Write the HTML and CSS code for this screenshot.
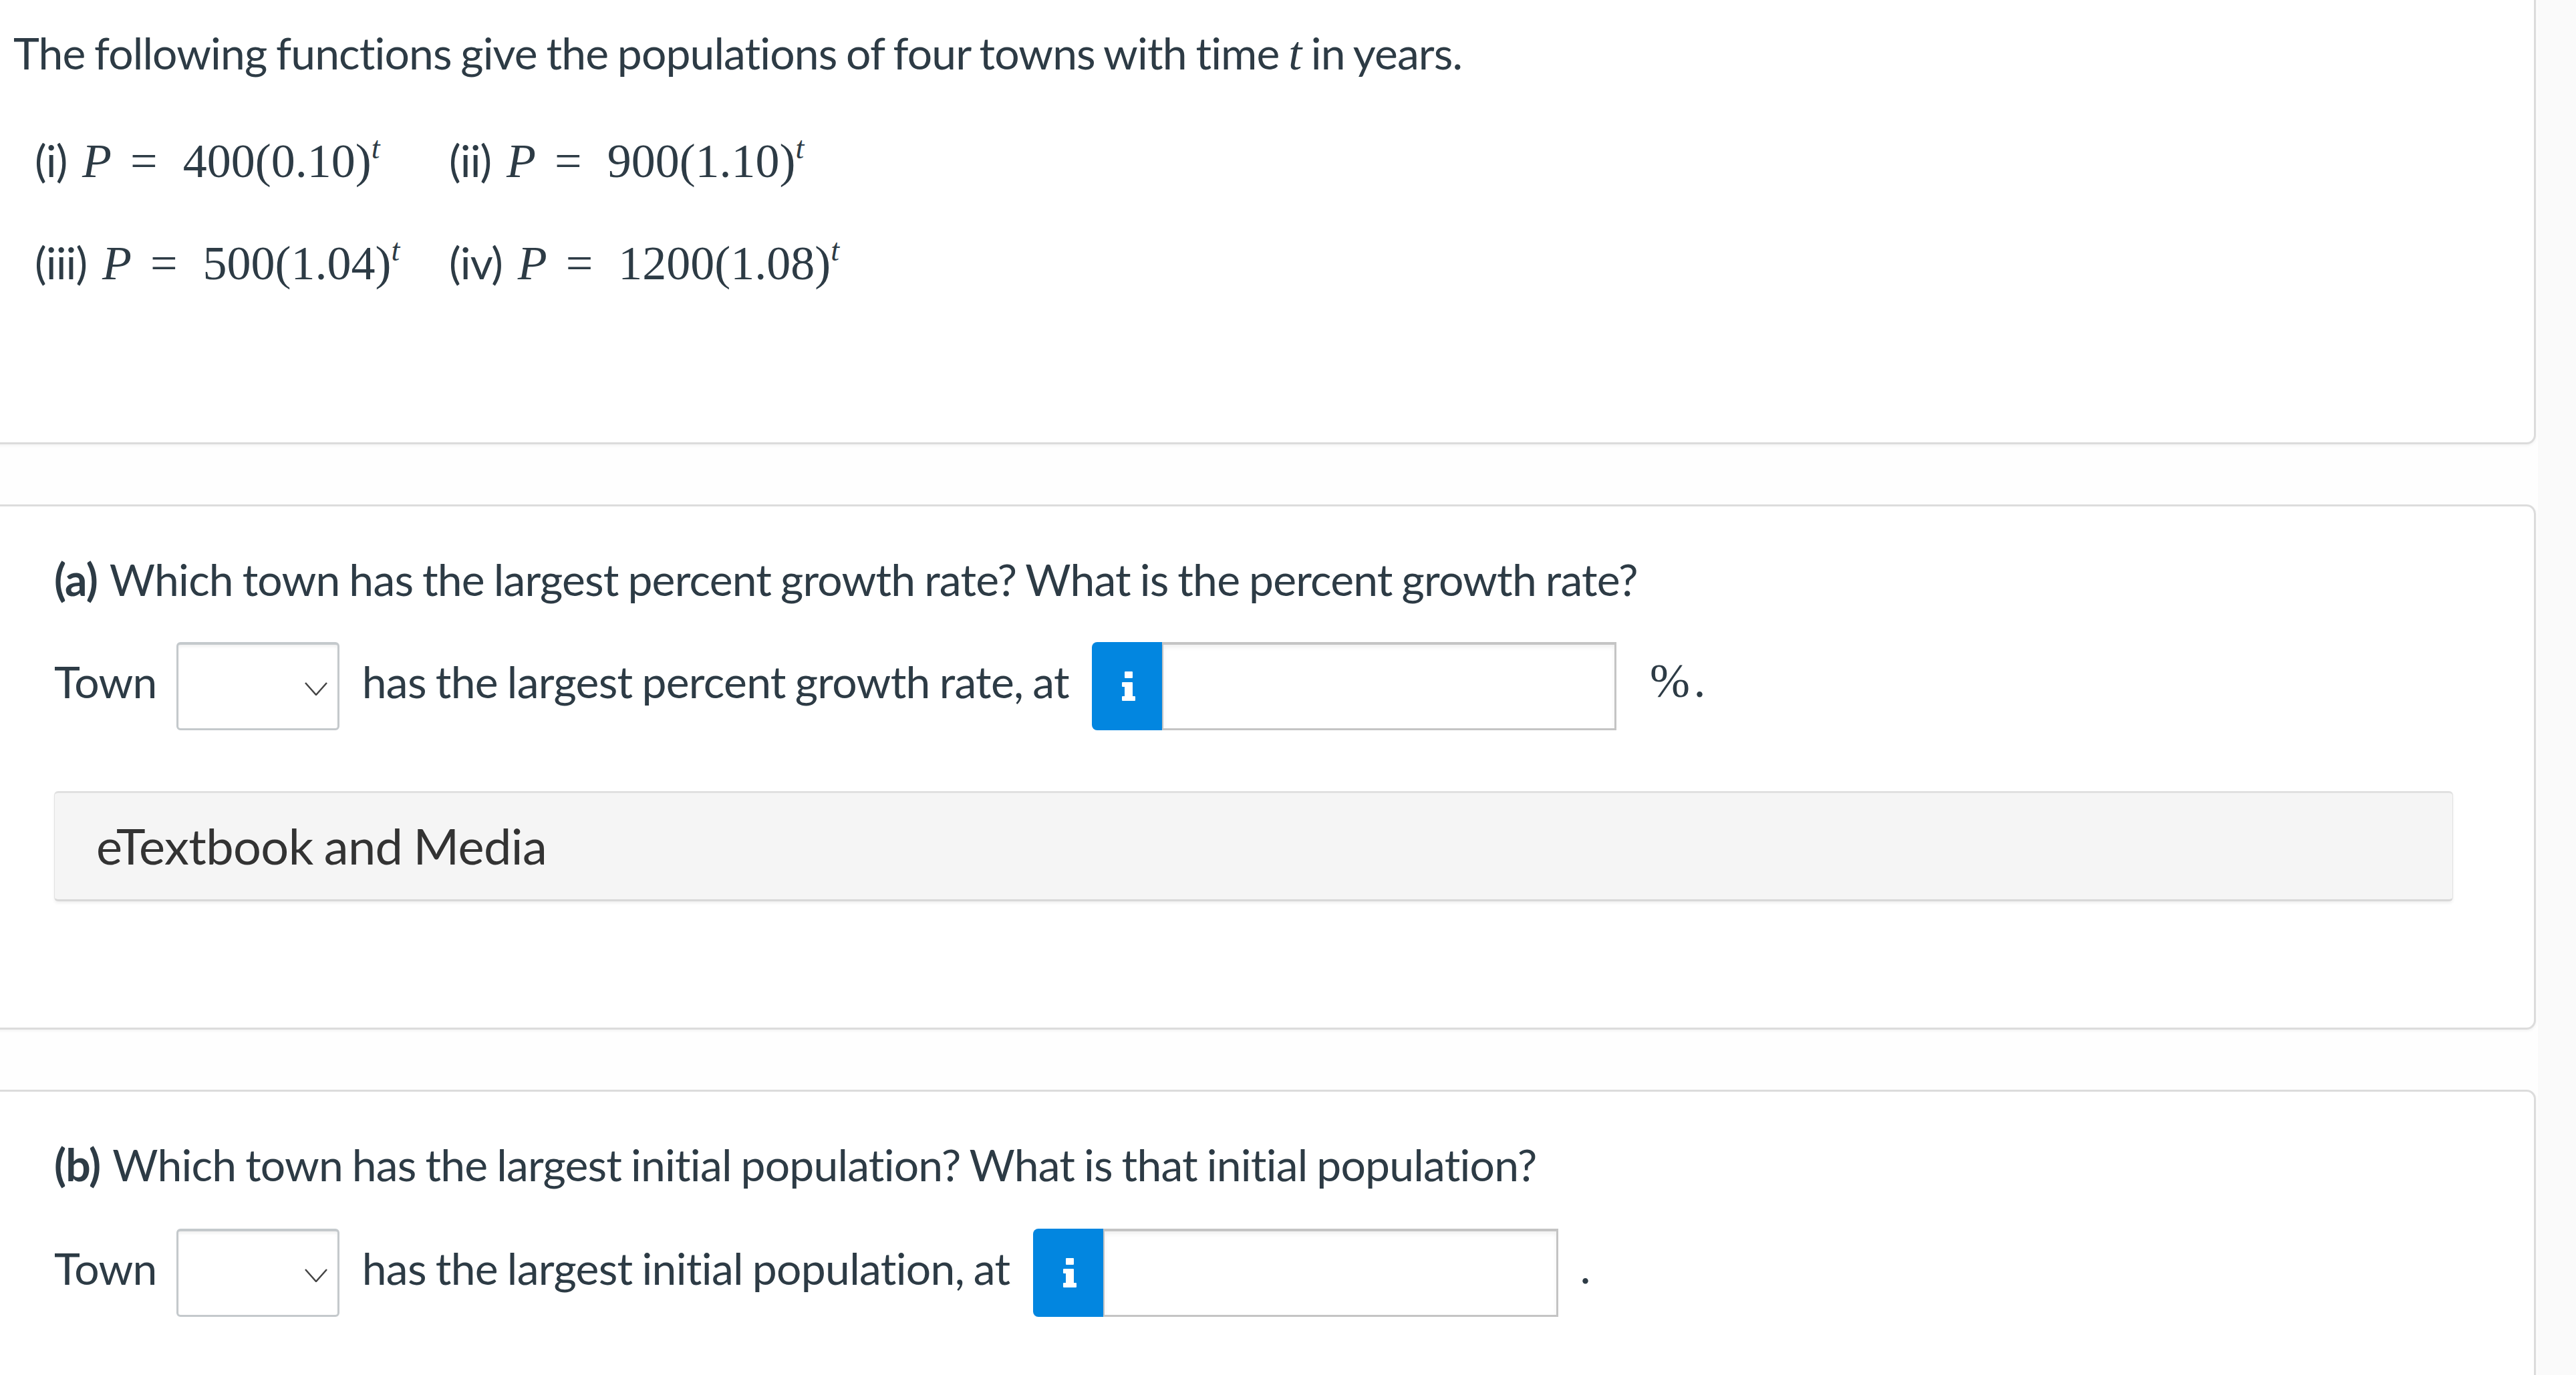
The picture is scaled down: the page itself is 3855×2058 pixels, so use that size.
FILE: index.html
```html
<!DOCTYPE html>
<html>
<head>
  <meta charset='utf-8'>
  <title>Populations of four towns</title>
  <link rel="stylesheet" href="styles.css">
</head>
<body>
  <div class='page'>

    <section class='card card-intro'>
      <p class='intro'>The following functions give the populations of four towns with time <i class='math'>t</i> in years.</p>
      <div class='formulas'>
        <div class='formula'>(i) <i class='math var'>P</i><span class='math eq'>=</span><span class='math'>400(0.10)<sup>t</sup></span></div>
        <div class='formula'>(ii) <i class='math var'>P</i><span class='math eq'>=</span><span class='math'>900(1.10)<sup>t</sup></span></div>
        <div class='formula'>(iii) <i class='math var'>P</i><span class='math eq'>=</span><span class='math'>500(1.04)<sup>t</sup></span></div>
        <div class='formula'>(iv) <i class='math var'>P</i><span class='math eq'>=</span><span class='math'>1200(1.08)<sup>t</sup></span></div>
      </div>
    </section>

    <section class='card card-a'>
      <p class='question'><b>(a)</b> Which town has the largest percent growth rate? What is the percent growth rate?</p>
      <div class='answer'>
        <span class='label'>Town</span>
        <div class='select-box'>
          <svg class='chevron' viewBox='0 0 34 20'><path d='M1 1 L17 19 L33 1'/></svg>
        </div>
        <span class='label'>has the largest percent growth rate, at</span>
        <div class='field'>
          <button class='info-btn' type='button'>
            <svg class='info-icon' viewBox='0 0 20 44'><path d='M5 0 H15 Q16 0 16 1 V9 Q16 10 15 10 H5 Q4 10 4 9 V1 Q4 0 5 0 Z M1 16 H15 Q16 16 16 17 V37 H19 Q20 37 20 38 V43 Q20 44 19 44 H1 Q0 44 0 43 V38 Q0 37 1 37 H4 V23 H1 Q0 23 0 22 V17 Q0 16 1 16 Z'/></svg>
          </button>
          <input class='field-input input-a' type='text'>
        </div>
        <span class='label unit math'>% .</span>
      </div>
      <div class='media'>eTextbook and Media</div>
    </section>

    <section class='card card-b'>
      <p class='question'><b>(b)</b> Which town has the largest initial population? What is that initial population?</p>
      <div class='answer'>
        <span class='label'>Town</span>
        <div class='select-box'>
          <svg class='chevron' viewBox='0 0 34 20'><path d='M1 1 L17 19 L33 1'/></svg>
        </div>
        <span class='label'>has the largest initial population, at</span>
        <div class='field'>
          <button class='info-btn' type='button'>
            <svg class='info-icon' viewBox='0 0 20 44'><path d='M5 0 H15 Q16 0 16 1 V9 Q16 10 15 10 H5 Q4 10 4 9 V1 Q4 0 5 0 Z M1 16 H15 Q16 16 16 17 V37 H19 Q20 37 20 38 V43 Q20 44 19 44 H1 Q0 44 0 43 V38 Q0 37 1 37 H4 V23 H1 Q0 23 0 22 V17 Q0 16 1 16 Z'/></svg>
          </button>
          <input class='field-input input-b' type='text'>
        </div>
        <span class='label unit unit-b math'>.</span>
      </div>
    </section>

  </div>
</body>
</html>
```

FILE: styles.css
```css
* {box-sizing: border-box;}

html, body {
  margin: 0;
  height: 2058px;
  overflow: hidden;
  background-color: #fafafa;
}

body {
  font-family: Lato, "Open Sans", sans-serif;
  font-size: 66px;
  letter-spacing: -0.9px;
  word-spacing: -2.3px;
  color: #2d3b45;
}

.page {
  width: 3798px;
  height: 2058px;
  background-color: #fefefe;
  display: flex;
  flex-direction: column;
  gap: 90px;
  overflow: hidden;
}

/* the cards run off the left edge of the window */
.card {
  margin-left: -24px;
  width: 3819px;
  flex-shrink: 0;
  background-color: #fff;
  border: 3px solid #dcdcdc;
  border-radius: 14px;
  box-shadow: 0 2px 4px rgba(0, 0, 0, 0.05);
}

.card-intro {
  margin-top: -40px;
  height: 705px;
  padding: 77px 0 0 41px;
}

.card-a {
  height: 786px;
  padding: 70px 0 0 102px;
}

.card-b {
  height: 600px;
  padding: 70px 0 0 102px;
}

p {
  margin: 0;
}

.intro, .question {
  line-height: 78px;
}

.question {
  letter-spacing: -0.8px;
}

.question b {
  margin-right: 5px;
}

.math {
  font-family: "Liberation Serif", "Times New Roman", serif;
  font-size: 72px;
  letter-spacing: 0;
}

.formulas {
  display: grid;
  grid-template-columns: 620px auto;
  justify-content: start;
  row-gap: 72px;
  margin: 81px 0 0 32px;
}

.formula {
  line-height: 80px;
  white-space: nowrap;
}

.var {
  margin-left: 9px;
}

.eq {
  margin: 0 38px 0 28px;
}

sup {
  font-size: 46px;
  font-style: italic;
  line-height: 0;
  vertical-align: 28px;
}

.answer {
  display: flex;
  align-items: center;
  height: 132px;
}

.card-a .answer {
  margin-top: 55px;
}

.card-b .answer {
  margin-top: 57px;
}

.label {
  margin-bottom: 16px;
  letter-spacing: -0.7px;
}

.select-box {
  width: 244px;
  height: 132px;
  margin: 0 34px 0 29px;
  padding: 0 15px 6px 0;
  display: flex;
  justify-content: flex-end;
  align-items: center;
  background-color: #fff;
  border: 3px solid #c4c9cc;
  border-top-width: 4px;
  border-radius: 6px;
  box-shadow: inset 0 3px 4px rgba(0, 0, 0, 0.06);
}

.chevron {
  width: 34px;
  height: 20px;
  margin-top: 12px;
}

.chevron path {
  fill: none;
  stroke: #444;
  stroke-width: 2.5;
}

.field {
  display: flex;
  height: 132px;
  margin-left: 34px;
}

.info-btn {
  width: 105px;
  height: 132px;
  padding: 0 0 0 6px;
  border: 0;
  border-radius: 8px 0 0 8px;
  background-color: #0286e0;
  display: flex;
  justify-content: center;
  align-items: center;
}

.info-icon {
  width: 20px;
  height: 44px;
  fill: #fff;
}

.field-input {
  height: 132px;
  background-color: #fff;
  border: 3px solid #c4c4c4;
  border-top-width: 4px;
  border-left-width: 2px;
  box-shadow: inset 0 4px 6px rgba(0, 0, 0, 0.06);
  outline: none;
}

.input-a {
  width: 680px;
}

.input-b {
  width: 681px;
}

.unit {
  margin-left: 50px;
  word-spacing: -11px;
}

.unit-b {
  margin-left: 32px;
}

.media {
  width: 3590px;
  height: 165px;
  margin-top: 91px;
  padding: 0 0 3px 62px;
  display: flex;
  align-items: center;
  font-size: 74px;
  letter-spacing: -0.6px;
  color: #333;
  background-color: #f5f5f5;
  border: 1px solid #e2e2e2;
  border-top: 3px solid #e0e0e0;
  border-bottom: 3px solid #d8d8d8;
  border-radius: 6px;
  box-shadow: 0 3px 4px rgba(0, 0, 0, 0.06);
}
```
